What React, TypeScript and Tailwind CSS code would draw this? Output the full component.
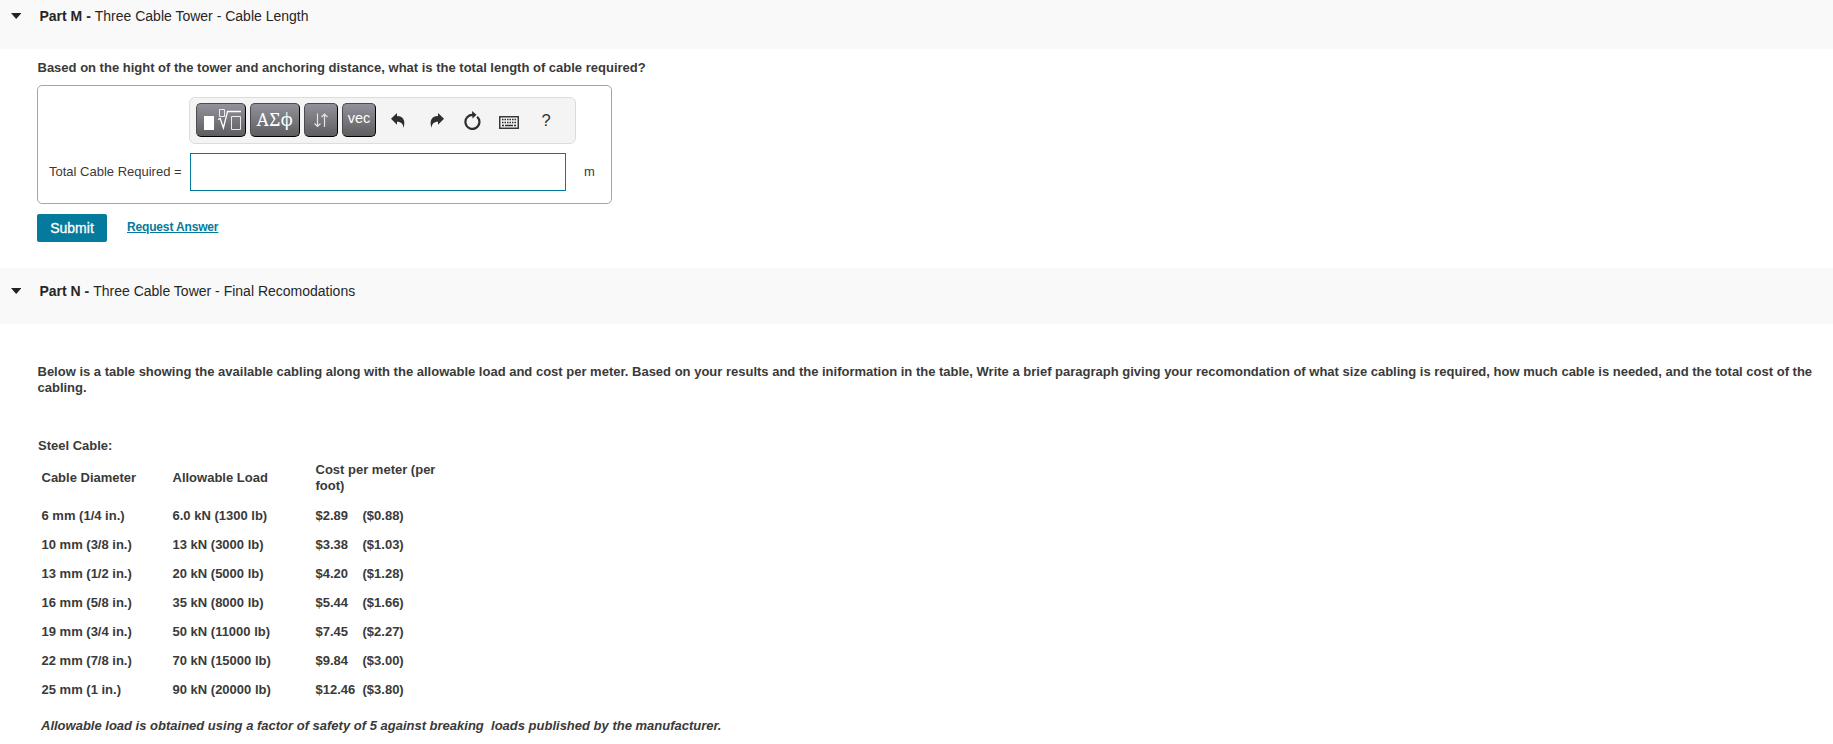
import type { ReactNode } from "react";

interface CableRow {
  diameter: string;
  load: string;
  perMeter: string;
  perFoot: string;
}

const CABLES: CableRow[] = [
  { diameter: "6 mm (1/4 in.)", load: "6.0 kN (1300 lb)", perMeter: "$2.89", perFoot: "($0.88)" },
  { diameter: "10 mm (3/8 in.)", load: "13 kN (3000 lb)", perMeter: "$3.38", perFoot: "($1.03)" },
  { diameter: "13 mm (1/2 in.)", load: "20 kN (5000 lb)", perMeter: "$4.20", perFoot: "($1.28)" },
  { diameter: "16 mm (5/8 in.)", load: "35 kN (8000 lb)", perMeter: "$5.44", perFoot: "($1.66)" },
  { diameter: "19 mm (3/4 in.)", load: "50 kN (11000 lb)", perMeter: "$7.45", perFoot: "($2.27)" },
  { diameter: "22 mm (7/8 in.)", load: "70 kN (15000 lb)", perMeter: "$9.84", perFoot: "($3.00)" },
  { diameter: "25 mm (1 in.)", load: "90 kN (20000 lb)", perMeter: "$12.46", perFoot: "($3.80)" },
];

function PartHeader({ part, title, className }: { part: string; title: string; className: string }) {
  return (
    <header className={`flex items-start bg-[#f9f9f9] pl-[11px] text-[14px] leading-4 text-[#262626] ${className}`}>
      <svg className="mt-[5px] mr-[18.500px] h-[6px] w-[10px] shrink-0" viewBox="0 0 10 6">
        <path d="M0 0h10.400L5.200 6z" fill="#222" />
      </svg>
      <h2>
        <span className="font-bold">{part} - </span>
        <span>{title}</span>
      </h2>
    </header>
  );
}

function ToolButton({ className, label, children }: { className: string; label: string; children: ReactNode }) {
  return (
    <button
      aria-label={label}
      className={`flex h-[34px] items-center justify-center rounded-[5px] border border-t-[#4c4c50] border-r-black border-b-black border-l-[#4c4c50] bg-linear-to-b from-[#93929c] to-[#5e5e60] text-white ${className}`}
    >
      {children}
    </button>
  );
}

function Toolbar() {
  return (
    <div className="flex h-[47px] w-[387px] items-start rounded-[6px] border border-[#dcdcdc] bg-[#f4f4f4] pt-[5px] pl-[6px]">
      <ToolButton label="Templates" className="mr-1 w-[50px]">
        <svg width="48" height="32" viewBox="0 0 48 32" fill="none" stroke="#fff">
          <rect x="7" y="12" width="10" height="14" fill="#fff" stroke="none" />
          <path d="M22.500 5.500h5v7h-5zM34.500 12.500h9v13h-9z" strokeOpacity=".85" />
          <path d="M21 15.500l2.200-1 3.200 9.500 4.100-16.500h13.500" strokeWidth="1.300" />
        </svg>
      </ToolButton>
      <ToolButton label="Symbols" className="mr-1 w-[50px] pb-[2px]">
        <span className="font-['Noto_Serif','Liberation_Serif','Times_New_Roman',serif] text-[17.500px] leading-5 tracking-[0.5px]">
          ΑΣϕ
        </span>
      </ToolButton>
      <ToolButton label="Arrows" className="mr-1 w-[34px]">
        <svg width="16" height="18" viewBox="0 0 16 18" fill="none" stroke="#e4e4e6" strokeWidth="1.200">
          <path d="M4.500 2.500v13M1.500 12.500l3 3 3-3M11.500 16v-13M8.500 6l3-3 3 3" />
        </svg>
      </ToolButton>
      <ToolButton label="Vector" className="w-[34px] pb-[2px] text-[14.500px]">
        vec
      </ToolButton>
      <div className="flex h-[34px] items-center text-[#2e2e2e]">
        <svg className="ml-[15px]" width="15" height="15" viewBox="0 0 15 15" fill="currentColor">
          <path d="M0 5.800L6 0v3.100c6 .2 9 4.200 6.500 11.900-.3-4-2.300-6.200-6.500-6.200v3z" />
        </svg>
        <svg className="ml-[23px]" width="15" height="15" viewBox="0 0 15 15" fill="currentColor">
          <path d="M15 5.800L9 0v3.100C3 3.300 0 7.300 2.500 15c.3-4 2.300-6.200 6.500-6.200v3z" />
        </svg>
        <svg className="ml-[20px]" width="17" height="19" viewBox="0 0 17 19">
          <path d="M13.100 5.700A7 7 0 1 1 9.500 4" fill="none" stroke="currentColor" strokeWidth="2.200" />
          <path d="M8 0l4.500 3.800L8.500 7.500z" fill="currentColor" />
        </svg>
        <svg className="mt-[4px] ml-[18px]" width="20" height="13" viewBox="0 0 20 13" fill="none" stroke="currentColor">
          <rect x=".75" y=".75" width="18.500" height="11.500" strokeWidth="1.400" />
          <path d="M3 3.500h14M3 6.500h14" strokeDasharray="1.500 1" strokeWidth="1.400" />
          <path d="M3 9.500h2M6 9.500h8M15 9.500h2" strokeWidth="1.300" />
        </svg>
        <span className="ml-[22.500px] text-[16.500px] leading-5">?</span>
      </div>
    </div>
  );
}

function PartM() {
  return (
    <section>
      <PartHeader part="Part M" title="Three Cable Tower - Cable Length" className="h-[49px] pt-[8px]" />
      <div className="h-[219px] pt-[11px] pl-[37px]">
        <p className="pl-[0.500px] text-[13px] leading-4 font-bold">
          Based on the hight of the tower and anchoring distance, what is the total length of cable required?
        </p>
        <div className="mt-[9px] flex h-[119px] w-[575px] flex-col rounded-[5px] border border-[#a5a5a5] pt-[11px]">
          <div className="pl-[151px]">
            <Toolbar />
          </div>
          <div className="mt-[9px] flex items-center text-[13px]">
            <label htmlFor="cable" className="w-[152px] pl-[11px]">
              Total Cable Required =
            </label>
            <input id="cable" className="h-[38px] w-[376px] border border-[#047a9c] outline-none" />
            <span className="ml-[18px]">m</span>
          </div>
        </div>
        <div className="mt-[10px] flex items-start">
          <button className="h-[28px] w-[70px] rounded-[2px] bg-[#047a9c] text-[14px] text-white [-webkit-text-stroke:0.3px_white]">
            Submit
          </button>
          <a className="mt-[5px] ml-5 text-[12px] leading-4 font-bold tracking-[-0.16px] text-[#047a9c] underline">
            Request Answer
          </a>
        </div>
      </div>
    </section>
  );
}

function CableTable() {
  return (
    <table className="ml-[4px] table-fixed border-collapse text-left leading-4">
      <colgroup>
        <col className="w-[131px]" />
        <col className="w-[143px]" />
        <col className="w-[130px]" />
      </colgroup>
      <thead>
        <tr className="h-[47px]">
          <th>Cable Diameter</th>
          <th>Allowable Load</th>
          <th>Cost per meter (per foot)</th>
        </tr>
      </thead>
      <tbody>
        {CABLES.map((row) => (
          <tr key={row.diameter} className="h-[29px]">
            <td>{row.diameter}</td>
            <td>{row.load}</td>
            <td>
              <span className="inline-block w-[47px]">{row.perMeter}</span>
              {row.perFoot}
            </td>
          </tr>
        ))}
      </tbody>
    </table>
  );
}

function PartN() {
  return (
    <section>
      <PartHeader part="Part N" title="Three Cable Tower - Final Recomodations" className="h-[56px] pt-[15px]" />
      <div className="pt-[40px] pl-[37.500px] text-[13px] leading-4 font-bold">
        <p className="w-[1785px]">
          Below is a table showing the available cabling along with the allowable load and cost per meter. Based on your
          results and the iniformation in the table, Write a brief paragraph giving your recomondation of what size
          cabling is required, how much cable is needed, and the total cost of the cabling.
        </p>
        <p className="mt-[42px] ml-[0.500px]">Steel Cable:</p>
        <CableTable />
        <p className="mt-[14px] ml-[3.500px] whitespace-pre italic">
          {"Allowable load is obtained using a factor of safety of 5 against breaking  loads published by the manufacturer."}
        </p>
      </div>
    </section>
  );
}

export default function App() {
  return (
    <main className="h-[744px] w-full overflow-hidden bg-white font-['Liberation_Sans',Arial,sans-serif] text-[#3a3a3a]">
      <PartM />
      <PartN />
    </main>
  );
}
